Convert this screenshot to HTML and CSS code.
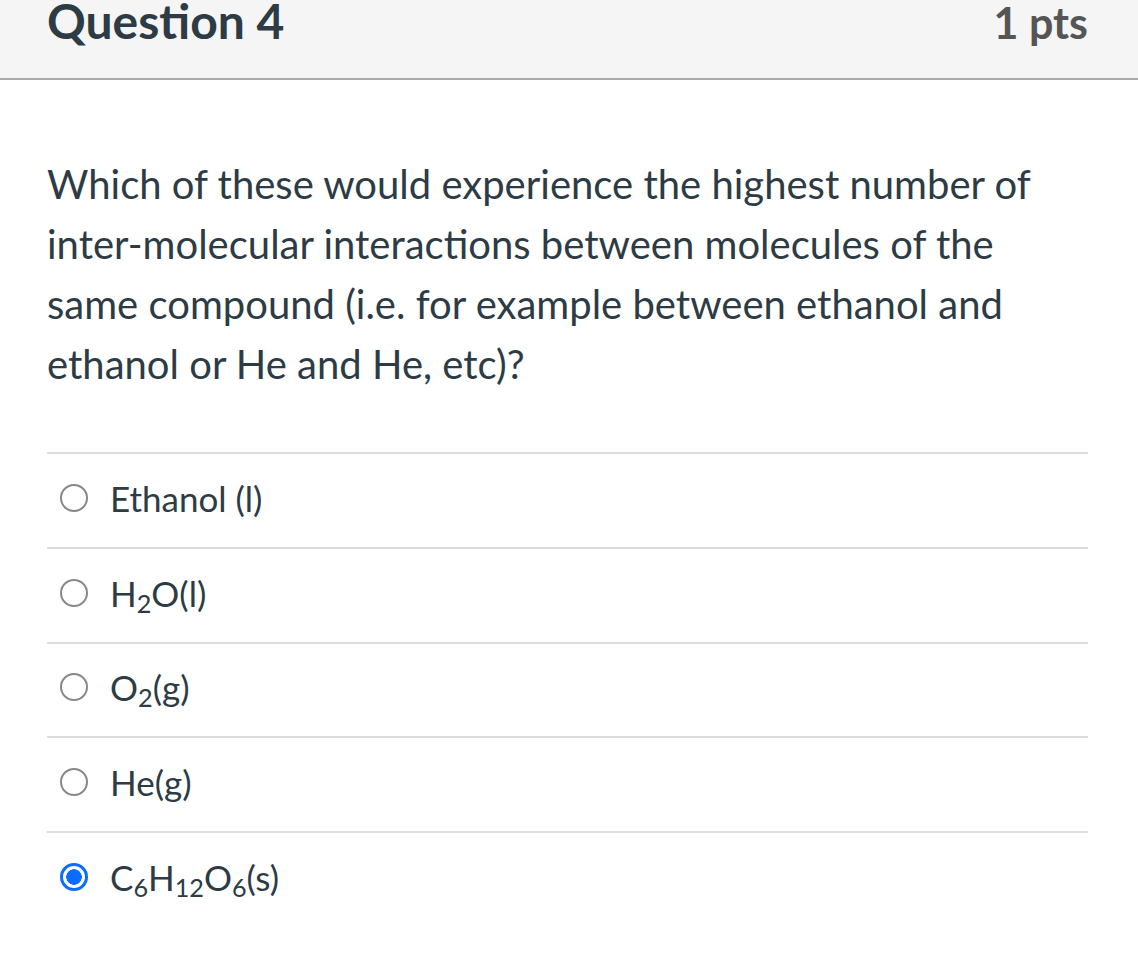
FILE: index.html
```html
<!DOCTYPE html>
<html>
<head>
<meta charset="utf-8">
<link rel="stylesheet" href="styles.css">
</head>
<body>
<div class="question">
  <div class="header">
    <h2 class="title">Question 4</h2>
    <div class="points">1 pts</div>
  </div>
  <div class="body">
    <p class="text">Which of these would experience the highest number of <span class="nowrap">inter-molecular</span> interactions between molecules of the same compound (i.e. for example between ethanol and ethanol or He and He, etc)?</p>
    <div class="answers">
      <label class="answer"><span class="radio"></span><span class="label">Ethanol (l)</span></label>
      <label class="answer"><span class="radio"></span><span class="label">H<sub>2</sub>O(l)</span></label>
      <label class="answer"><span class="radio"></span><span class="label">O<sub>2</sub>(g)</span></label>
      <label class="answer"><span class="radio"></span><span class="label">He(g)</span></label>
      <label class="answer"><span class="radio checked"></span><span class="label">C<sub>6</sub>H<sub>12</sub>O<sub>6</sub>(s)</span></label>
    </div>
  </div>
</div>
</body>
</html>
```

FILE: styles.css
```css
html, body {
  margin: 0;
  padding: 0;
  background: #fff;
}
body {
  font-family: Lato, "Open Sans", sans-serif;
  color: #2d3b45;
}
.header {
  height: 78px;
  background: #f5f5f5;
  border-bottom: 2px solid #aaaaaa;
  display: flex;
  justify-content: space-between;
  align-items: flex-start;
  padding: 0 50px 0 47px;
}
.title {
  margin: 0;
  font-size: 48px;
  font-weight: 700;
  line-height: 42px;
  color: #2d3b45;
}
.points {
  font-size: 43px;
  font-weight: 700;
  line-height: 46px;
  color: #555555;
}
.body {
  padding: 74px 50px 0 47px;
}
.text {
  margin: 0;
  font-size: 40px;
  line-height: 60px;
}
.nowrap {
  white-space: nowrap;
}
.answers {
  margin-top: 58px;
}
.answer {
  box-sizing: border-box;
  display: flex;
  align-items: center;
  gap: 22px;
  height: 94.75px;
  border-top: 2px solid #dddddd;
  padding: 0 0 5px 13px;
}
.radio {
  box-sizing: border-box;
  width: 28px;
  height: 28px;
  border: 2px solid #888;
  border-radius: 50%;
  flex: none;
}
.radio.checked {
  border: 3px solid #0b6cff;
  background: radial-gradient(circle, #0b6cff 0 7.5px, #fff 8px);
}
.label {
  font-size: 35px;
  line-height: 40px;
}
.label sub {
  font-size: 0.72em;
  vertical-align: -0.22em;
  line-height: 0;
}
```
